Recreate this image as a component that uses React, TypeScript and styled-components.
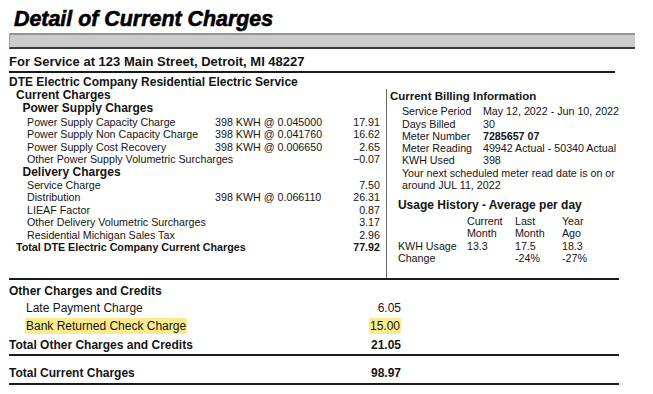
import React from "react";
import styled, { createGlobalStyle } from "styled-components";

const GlobalStyle = createGlobalStyle`
  html, body { margin: 0; padding: 0; background: #ffffff; }
  body { font-family: "Liberation Sans", Arial, Helvetica, sans-serif; color: #141414; }
  * { box-sizing: border-box; }
`;

const Page = styled.div`
  width: 653px;
  height: 394px;
  overflow: hidden;
  padding-left: 9px;
  display: flex;
  flex-direction: column;
`;

const Title = styled.h1`
  margin: 8px 0 0 5px;
  font-size: 21.4px;
  line-height: 22px;
  font-weight: 700;
  font-style: italic;
  color: #000;
  -webkit-text-stroke: 0.6px #000;
`;

const GrayBar = styled.div`
  width: 626px;
  height: 16px;
  margin-top: 3px;
  background: #cbcbcb;
  border-top: 2px solid #939393;
  border-bottom: 2px solid #3a3a3a;
  border-left: 1px solid #a0a0a0;
`;

const ServiceLine = styled.div`
  width: 606px;
  margin-top: 5px;
  padding-bottom: 1px;
  font-size: 13px;
  line-height: 16px;
  font-weight: 700;
  border-bottom: 2px solid #1a1a1a;
`;

const CompanyHeading = styled.div`
  margin-top: 3px;
  font-size: 12px;
  line-height: 13px;
  font-weight: 700;
`;

const Split = styled.div`
  display: flex;
  width: 610px;
  height: 191px;
  border-bottom: 2px solid #1a1a1a;
`;

const LeftCol = styled.div`
  width: 395px;
  padding-right: 6px;
  border-right: 1px solid #6a6a6a;
  display: flex;
  flex-direction: column;
`;

const RightCol = styled.div`
  flex: 1;
  padding-left: 3px;
  display: flex;
  flex-direction: column;
`;

const Heading = styled.div<{ $indent: number; $size?: number }>`
  padding-left: ${(p) => p.$indent}px;
  font-size: ${(p) => p.$size ?? 12}px;
  line-height: 13.3px;
  font-weight: 700;
  white-space: nowrap;
`;

const ChargeRow = styled.div<{ $bold?: boolean; $indent?: number; $height?: number }>`
  display: flex;
  padding-left: ${(p) => p.$indent ?? 18}px;
  height: ${(p) => p.$height ?? 12.5}px;
  line-height: ${(p) => p.$height ?? 12.5}px;
  font-size: 10.7px;
  font-weight: ${(p) => (p.$bold ? 700 : 400)};
  white-space: nowrap;
`;

const ChargeLabel = styled.span<{ $width: number }>`
  width: ${(p) => p.$width}px;
  flex-shrink: 0;
  overflow: visible;
`;

const Kwh = styled.span`
  flex: 1;
`;

const Amount = styled.span`
  text-align: right;
`;

const BillingTitle = styled.div`
  margin-top: 1px;
  font-size: 11.5px;
  line-height: 13.3px;
  font-weight: 700;
`;

const InfoGrid = styled.div`
  margin-top: 2px;
  padding-left: 12px;
  display: grid;
  grid-template-columns: 81px 1fr;
  grid-auto-rows: 12.3px;
  font-size: 10.7px;
  line-height: 12.3px;
  white-space: nowrap;
`;

const InfoValue = styled.span<{ $bold?: boolean }>`
  font-weight: ${(p) => (p.$bold ? 700 : 400)};
`;

const Note = styled.div`
  padding-left: 12px;
  font-size: 10.7px;
  line-height: 12.3px;
`;

const UsageTitle = styled.div`
  margin-top: 8px;
  padding-left: 8px;
  font-size: 12px;
  line-height: 13px;
  font-weight: 700;
  white-space: nowrap;
`;

const UsageGrid = styled.div`
  margin-top: 3px;
  padding-left: 8px;
  display: grid;
  grid-template-columns: 69px 48px 47px 1fr;
  grid-auto-rows: 12.1px;
  font-size: 10.7px;
  line-height: 12.1px;
  white-space: nowrap;
`;

const BottomHeading = styled.div`
  margin-top: 3px;
  font-size: 12px;
  line-height: 16px;
  font-weight: 700;
`;

const BottomRow = styled.div<{ $bold?: boolean; $indent?: number; $rule?: boolean; $top?: number }>`
  display: flex;
  align-items: center;
  width: 610px;
  height: ${(p) => 18.3 + (p.$top ?? 0) + (p.$rule ? 2 : 0)}px;
  padding-top: ${(p) => p.$top ?? 0}px;
  padding-left: ${(p) => p.$indent ?? 0}px;
  padding-right: 218px;
  font-size: 12px;
  font-weight: ${(p) => (p.$bold ? 700 : 400)};
  border-bottom: ${(p) => (p.$rule ? "2px solid #1a1a1a" : "none")};
`;

const BottomLabel = styled.span`
  flex: 1;
  white-space: nowrap;
`;

const Highlight = styled.span`
  background: #fbeb8c;
  padding: 1px 1px;
  border-radius: 2px;
`;

type Charge = { label: string; kwh?: string; amount: string };

const powerSupply: Charge[] = [
  { label: "Power Supply Capacity Charge", kwh: "398 KWH @ 0.045000", amount: "17.91" },
  { label: "Power Supply Non Capacity Charge", kwh: "398 KWH @ 0.041760", amount: "16.62" },
  { label: "Power Supply Cost Recovery", kwh: "398 KWH @ 0.006650", amount: "2.65" },
  { label: "Other Power Supply Volumetric Surcharges", amount: "\u22120.07" },
];

const delivery: Charge[] = [
  { label: "Service Charge", amount: "7.50" },
  { label: "Distribution", kwh: "398 KWH @ 0.066110", amount: "26.31" },
  { label: "LIEAF Factor", amount: "0.87" },
  { label: "Other Delivery Volumetric Surcharges", amount: "3.17" },
  { label: "Residential Michigan Sales Tax", amount: "2.96" },
];

const billing: { label: string; value: string; bold?: boolean }[] = [
  { label: "Service Period", value: "May 12, 2022 - Jun 10, 2022" },
  { label: "Days Billed", value: "30" },
  { label: "Meter Number", value: "7285657 07", bold: true },
  { label: "Meter Reading", value: "49942 Actual - 50340 Actual" },
  { label: "KWH Used", value: "398" },
];

const usage: string[][] = [
  ["", "Current", "Last", "Year"],
  ["", "Month", "Month", "Ago"],
  ["KWH Usage", "13.3", "17.5", "18.3"],
  ["Change", "", "-24%", "-27%"],
];

const ChargeRows = ({ items }: { items: Charge[] }) => (
  <>
    {items.map((c) => (
      <ChargeRow key={c.label}>
        <ChargeLabel $width={188}>{c.label}</ChargeLabel>
        <Kwh>{c.kwh ?? ""}</Kwh>
        <Amount>{c.amount}</Amount>
      </ChargeRow>
    ))}
  </>
);

export default function App() {
  return (
    <>
      <GlobalStyle />
      <Page>
        <Title>Detail of Current Charges</Title>
        <GrayBar />
        <ServiceLine>For Service at 123 Main Street, Detroit, MI 48227</ServiceLine>
        <CompanyHeading>DTE Electric Company Residential Electric Service</CompanyHeading>
        <Split>
          <LeftCol>
            <Heading $indent={7}>Current Charges</Heading>
            <Heading $indent={13.5}>Power Supply Charges</Heading>
            <ChargeRows items={powerSupply} />
            <Heading $indent={13.5}>Delivery Charges</Heading>
            <ChargeRows items={delivery} />
            <ChargeRow $bold $indent={7} $height={13.3}>
              <ChargeLabel $width={197}>Total DTE Electric Company Current Charges</ChargeLabel>
              <Kwh />
              <Amount>77.92</Amount>
            </ChargeRow>
          </LeftCol>
          <RightCol>
            <BillingTitle>Current Billing Information</BillingTitle>
            <InfoGrid>
              {billing.map((b) => (
                <React.Fragment key={b.label}>
                  <span>{b.label}</span>
                  <InfoValue $bold={b.bold}>{b.value}</InfoValue>
                </React.Fragment>
              ))}
            </InfoGrid>
            <Note>
              Your next scheduled meter read date is on or
              <br />
              around JUL 11, 2022
            </Note>
            <UsageTitle>Usage History - Average per day</UsageTitle>
            <UsageGrid>
              {usage.map((row, r) =>
                row.map((cell, c) => <span key={`${r}-${c}`}>{cell}</span>)
              )}
            </UsageGrid>
          </RightCol>
        </Split>
        <BottomHeading>Other Charges and Credits</BottomHeading>
        <BottomRow $indent={17}>
          <BottomLabel>Late Payment Charge</BottomLabel>
          <Amount>6.05</Amount>
        </BottomRow>
        <BottomRow $indent={16}>
          <BottomLabel>
            <Highlight>Bank Returned Check Charge</Highlight>
          </BottomLabel>
          <Amount>
            <Highlight>15.00</Highlight>
          </Amount>
        </BottomRow>
        <BottomRow $bold $rule>
          <BottomLabel>Total Other Charges and Credits</BottomLabel>
          <Amount>21.05</Amount>
        </BottomRow>
        <BottomRow $bold $rule $top={8.4}>
          <BottomLabel>Total Current Charges</BottomLabel>
          <Amount>98.97</Amount>
        </BottomRow>
      </Page>
    </>
  );
}
